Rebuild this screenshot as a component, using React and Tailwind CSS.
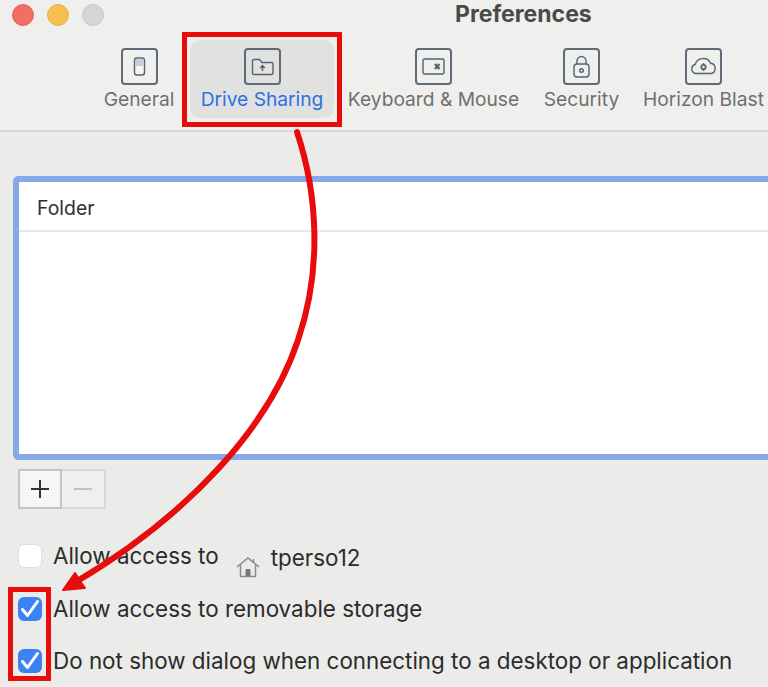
import React from "react";

function TabIcon({ children }) {
  return (
    <div className="flex h-[37px] w-[37px] items-center justify-center rounded-[4px] border-2 border-[#5f6b78]">
      <svg width="27" height="27" viewBox="0 0 27 27" fill="none" stroke="#566270" strokeWidth="1.4">
        {children}
      </svg>
    </div>
  );
}

const tabs = [
  {
    label: "General",
    width: "w-[70px]",
    icon: (
      <>
        <rect x="8.5" y="5" width="10" height="17" rx="2.5" fill="#fff" fillOpacity="0.3" />
        <path d="M9.2 13V7.5a2 2 0 0 1 2-1.8h4.6a2 2 0 0 1 2 1.8V13z" fill="#c3ced9" stroke="none" />
      </>
    ),
  },
  {
    label: "Drive Sharing",
    active: true,
    icon: (
      <>
        <path d="M3.5 8a1.5 1.5 0 0 1 1.5-1.5h5.5l2.5 3h9.5a1.5 1.5 0 0 1 1.5 1.5v9a1.5 1.5 0 0 1-1.5 1.5H5A1.5 1.5 0 0 1 3.5 20z" />
        <path d="M13.5 18v-5M11.3 15l2.2-2.3 2.2 2.3" strokeWidth="1.5" />
      </>
    ),
  },
  {
    label: "Keyboard & Mouse",
    width: "w-[173px]",
    icon: (
      <>
        <rect x="3" y="6" width="21" height="15" rx="1.5" />
        <path d="M15 11l4.5 5M19.5 11L15 16" strokeWidth="2.4" />
      </>
    ),
  },
  {
    label: "Security",
    width: "w-[75px]",
    icon: (
      <>
        <rect x="6" y="11" width="15" height="13" rx="3" />
        <path d="M9 11V8a4.5 4.5 0 0 1 9 0v3" />
        <circle cx="13.5" cy="17.5" r="1.8" />
      </>
    ),
  },
  {
    label: "Horizon Blast",
    width: "w-[121px]",
    icon: (
      <>
        <path d="M6.5 20.5a4.6 4.6 0 0 1-1.4-9 8.4 8.4 0 0 1 15.6-1.2 5.2 5.2 0 0 1 .5 10.2z" />
        <circle cx="13.5" cy="14" r="2.2" strokeWidth="1.8" />
        <path d="M13.5 10v1.8M13.5 16.2V18" />
      </>
    ),
  },
];

function Tab({ tab }) {
  if (tab.active) {
    return (
      <div className="flex h-[78px] w-[144px] flex-col items-center rounded-[10px] bg-[#e1e1e0] pt-[8px]">
        <TabIcon>{tab.icon}</TabIcon>
        <span className="mt-[1px] text-[19.2px] leading-[26px] whitespace-nowrap text-[#2f6fe4]">{tab.label}</span>
      </div>
    );
  }
  return (
    <div className={`flex flex-col items-center pt-[8px] ${tab.width}`}>
      <TabIcon>{tab.icon}</TabIcon>
      <span className="mt-[1px] text-[19.2px] leading-[26px] whitespace-nowrap text-[#6f6f6f]">{tab.label}</span>
    </div>
  );
}

function Check({ checked }) {
  if (!checked) {
    return <div className="h-[24px] w-[24px] shrink-0 rounded-[6px] border border-[#dedede] bg-white" />;
  }
  return (
    <div className="h-[24px] w-[24px] shrink-0 rounded-[6px] bg-[#3b82f3]">
      <svg width="24" height="24" viewBox="0 0 24 24" fill="none" stroke="#fff" strokeWidth="3" strokeLinecap="round" strokeLinejoin="round">
        <path d="M4.5 12.5l5 6L19.5 4.5" />
      </svg>
    </div>
  );
}

export default function App() {
  return (
    <div className="relative h-[687px] w-[768px] overflow-hidden bg-[#ebebea] font-['Inter',sans-serif]">
      <div className="h-[132px] border-b-2 border-[#d8d8d7] bg-[#efefee]">
        <div className="relative h-[40px]">
          <div className="flex gap-[13px] pl-[12px] pt-[4px]">
            <div className="h-[22px] w-[22px] rounded-full border border-[#e5645c] bg-[#f26d64]" />
            <div className="h-[22px] w-[22px] rounded-full border border-[#e5b350] bg-[#f6bf52]" />
            <div className="h-[22px] w-[22px] rounded-full border border-[#c9c9c8] bg-[#d5d5d4]" />
          </div>
          <div className="absolute top-0 left-[455px] text-[23px] leading-[28px] font-bold text-[#4a4a4a]">Preferences</div>
        </div>
        <div className="flex pl-[104px]">
          <Tab tab={tabs[0]} />
          <div className="w-[16px]" />
          <Tab tab={tabs[1]} />
          <div className="w-[13px]" />
          <Tab tab={tabs[2]} />
          <div className="w-[24px]" />
          <Tab tab={tabs[3]} />
          <div className="w-[24px]" />
          <Tab tab={tabs[4]} />
        </div>
      </div>

      <div className="pt-[44px] pl-[13px]">
        <div className="h-[284px] w-[780px] rounded-[5px] border-[6px] border-[#86a9ea] bg-white">
          <div className="h-[50px] border-b-2 border-[#e8e8e8] pt-[14px] pl-[18px] text-[19.4px] leading-[24px] text-[#2e2e2e]">Folder</div>
        </div>

        <div className="mt-[9px] ml-[5px] flex">
          <div className="flex h-[40px] w-[44px] items-center justify-center border-2 border-[#c4c4c4] bg-[#f6f6f6]">
            <svg width="22" height="22" viewBox="0 0 22 22" stroke="#333" strokeWidth="2">
              <path d="M11 2v18M2 11h18" />
            </svg>
          </div>
          <div className="flex h-[40px] w-[44px] items-center justify-center border-2 border-l-0 border-[#d8d8d8] bg-[#efefee]">
            <svg width="20" height="20" viewBox="0 0 20 20" stroke="#c2c2c2" strokeWidth="2">
              <path d="M1 10h18" />
            </svg>
          </div>
        </div>

        <div className="mt-[35px] ml-[5px] flex flex-col gap-[28.5px] text-[22.4px] leading-[24px] text-[#2c2c2c]">
          <div className="flex h-[24px] items-center gap-[11px]">
            <Check />
            <span className="mb-[1px]">Allow access to</span>
            <svg className="mt-[22px] ml-[6px]" width="24" height="22" viewBox="0 0 24 22" fill="none" stroke="#8a8a8a" strokeWidth="1.5">
              <path d="M1 11L12 2l11 9M4.5 9v11.5h15V9M17.5 3v4" />
              <rect x="9.5" y="13" width="5" height="7.5" fill="#777" stroke="none" />
            </svg>
            <span className="mt-[3px]">tperso12</span>
          </div>
          <div className="flex h-[24px] items-center gap-[11px]">
            <Check checked />
            <span>Allow access to removable storage</span>
          </div>
          <div className="flex h-[24px] items-center gap-[11px]">
            <Check checked />
            <span className="whitespace-nowrap">Do not show dialog when connecting to a desktop or application</span>
          </div>
        </div>
      </div>

      {/* red callouts over the screenshot */}
      <div className="absolute top-[32px] left-[182px] h-[95px] w-[160px] border-[5px] border-[#e80c0c]" />
      <div className="absolute top-[587px] left-[8px] h-[94px] w-[43px] border-[5px] border-[#e80c0c]" />
      <svg className="absolute inset-0" width="768" height="687" viewBox="0 0 768 687" fill="none">
        <path d="M297 132C318 195 322 270 298 340C270 425 190 515 74 583" stroke="#e80c0c" strokeWidth="6" strokeLinecap="round" />
        <path d="M63 590L75 573L80 581L85 588z" fill="#e80c0c" stroke="#e80c0c" strokeWidth="2" strokeLinejoin="round" />
      </svg>
    </div>
  );
}
